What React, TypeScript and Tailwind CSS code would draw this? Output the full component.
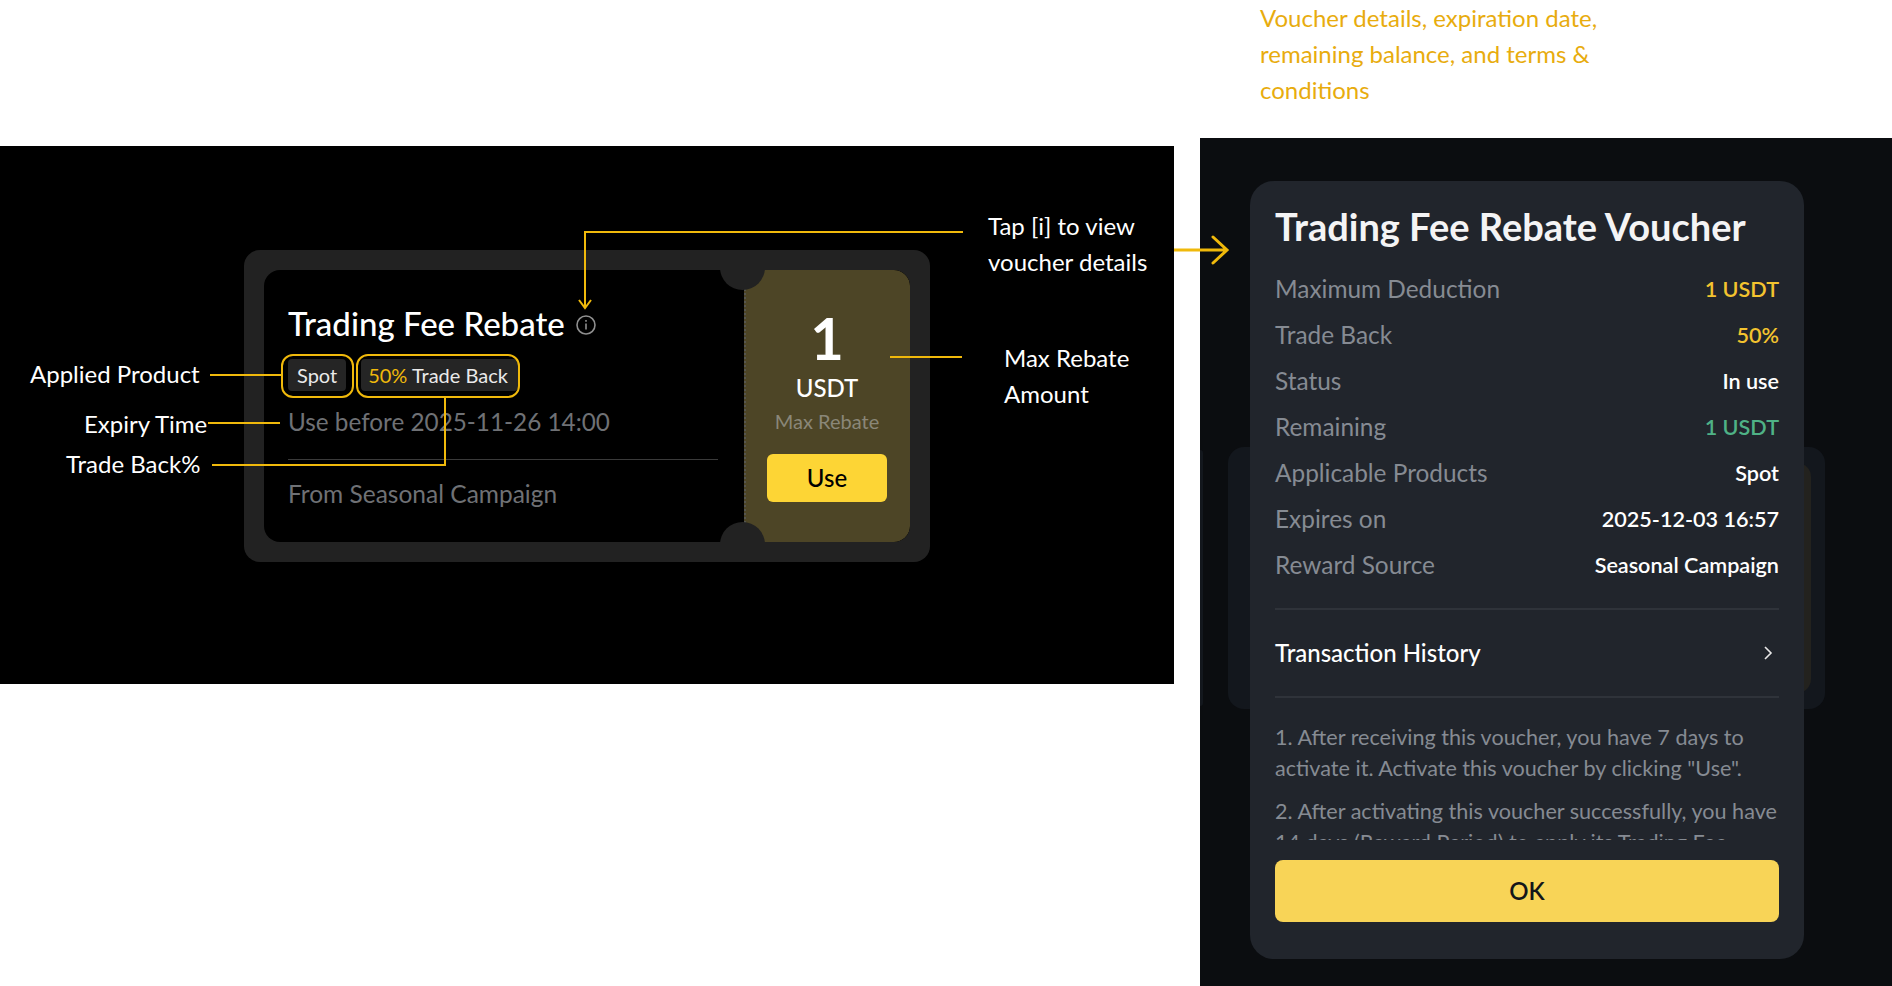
const font = { fontFamily: '"Lato", "Liberation Sans", sans-serif' };

const rows = [
  { label: "Maximum Deduction", value: "1 USDT", color: "text-[#f3c32f]" },
  { label: "Trade Back", value: "50%", color: "text-[#f3c32f]" },
  { label: "Status", value: "In use", color: "text-white" },
  { label: "Remaining", value: "1 USDT", color: "text-[#4fb286]" },
  { label: "Applicable Products", value: "Spot", color: "text-white" },
  { label: "Expires on", value: "2025-12-03 16:57", color: "text-white" },
  { label: "Reward Source", value: "Seasonal Campaign", color: "text-white" },
];

function Line({ className }: { className: string }) {
  return <div className={`absolute bg-[#f0b90b] ${className}`} />;
}

function Label({ className, children }: { className: string; children: React.ReactNode }) {
  return <div className={`absolute text-[24px] leading-[36px] text-white ${className}`}>{children}</div>;
}

function Ticket() {
  return (
    <div className="ml-[244px] mt-[104px] h-[312px] w-[686px] rounded-[16px] bg-[#222222] p-[20px]">
      <div className="relative flex h-[272px] w-[646px] overflow-hidden rounded-[16px] bg-black">
        <div className="w-[480px] pl-[24px] pt-[34px]">
          <div className="flex h-[40px] items-center text-[33px] font-medium text-white">
            Trading Fee Rebate
            <svg className="ml-[11px] mt-[2px]" width="20" height="20" viewBox="0 0 20 20" fill="none" stroke="#8f8f8f" strokeWidth="1.6">
              <circle cx="10" cy="10" r="9" />
              <path d="M10 8.5v6M10 5v1.8" />
            </svg>
          </div>
          <div className="mt-[15px] flex gap-[15px] text-[20px] leading-[32px] text-[#eaeaea]">
            <span className="rounded-[4px] bg-[#252525] px-[9px]">Spot</span>
            <span className="rounded-[4px] bg-[#252525] pl-[7px] pr-[10px]">
              <span className="text-[#f0b90b]">50%</span> Trade Back
            </span>
          </div>
          <div className="mt-[15px] text-[24.3px] leading-[32px] text-[#6f7175]">Use before 2025-11-26 14:00</div>
          <div className="mt-[21px] h-px w-[430px] bg-[#3a3a3a]" />
          <div className="mt-[18px] text-[24.5px] leading-[32px] text-[#6f7175]">From Seasonal Campaign</div>
        </div>
        <div className="flex w-[166px] flex-col items-center rounded-r-[16px] border-l-2 border-dotted border-[#55554f] bg-[#4d4526] pr-[2px] pt-[36px]">
          <div className="text-[58px] font-bold leading-[64px] text-white">1</div>
          <div className="mt-[2px] text-[24px] font-medium leading-[32px] text-white">USDT</div>
          <div className="mt-[3px] text-[20px] leading-[28px] text-[#8a8778]">Max Rebate</div>
          <button className="mt-[19px] h-[48px] w-[120px] rounded-[6px] bg-[#fdd535] text-[24px] font-medium text-black">Use</button>
        </div>
        {/* ticket notches */}
        <div className="absolute left-[456px] top-[-25px] h-[45px] w-[45px] rounded-full bg-[#222222]" />
        <div className="absolute bottom-[-25px] left-[456px] h-[45px] w-[45px] rounded-full bg-[#222222]" />
      </div>
    </div>
  );
}

function Details() {
  return (
    <div className="relative z-10 ml-[50px] mt-[43px] h-[778px] w-[554px] rounded-[24px] bg-[#21252c] px-[25px] pt-[21px]">
      <div className="text-[38px] font-bold leading-[48px] text-[#f4f4f5]">Trading Fee Rebate Voucher</div>
      <div className="mt-[16px]">
        {rows.map((r) => (
          <div key={r.label} className="flex h-[46px] items-center justify-between">
            <span className="text-[24.4px] text-[#868b93]">{r.label}</span>
            <span className={`text-[21.6px] font-semibold ${r.color}`}>{r.value}</span>
          </div>
        ))}
      </div>
      <div className="mt-[20px] h-[2px] bg-[#2f333a]" />
      <div className="flex h-[86px] items-center justify-between text-[24px] font-medium text-white">
        Transaction History
        <svg className="mr-[6px]" width="10" height="16" viewBox="0 0 10 16" fill="none" stroke="#e8e8e8" strokeWidth="1.6">
          <path d="M2 2l6 6-6 6" />
        </svg>
      </div>
      <div className="h-[2px] bg-[#2f333a]" />
      <div className="mt-[24px] h-[118px] overflow-hidden text-[21.6px] leading-[30.5px] text-[#868b93]">
        <p>1. After receiving this voucher, you have 7 days to activate it. Activate this voucher by clicking "Use".</p>
        <p className="mt-[13px]">2. After activating this voucher successfully, you have 14 days (Reward Period) to apply its Trading Fee</p>
      </div>
      <button className="mt-[20px] h-[62px] w-full rounded-[8px] bg-[#f8d457] text-[24px] font-semibold text-[#14161a]">OK</button>
    </div>
  );
}

export default function App() {
  return (
    <div className="relative h-[986px] w-[1892px] overflow-hidden bg-white" style={font}>
      <div className="flex">
        <div className="mt-[146px] h-[538px] w-[1174px] overflow-hidden bg-black">
          <Ticket />
        </div>
        <div className="ml-[26px] flex h-[986px] w-[692px] flex-col">
          <div className="h-[138px] pl-[60px] text-[24px] leading-[36px] text-[#e8ac0e]">
            Voucher details, expiration date,
            <br />
            remaining balance, and terms &amp;
            <br />
            conditions
          </div>
          <div className="relative flex-1 overflow-hidden bg-[#0b0d10]">
            {/* vouchers behind the dialog, dimmed */}
            <div className="absolute left-0 top-[312px] h-[256px] w-[3px] rounded-r-[4px] bg-[#13171d]" />
            <div className="absolute left-[28px] top-[309px] h-[262px] w-[597px] rounded-[16px] bg-[#13171d]" />
            <div className="absolute right-[81px] top-[325px] h-[230px] w-[30px] rounded-r-[14px] bg-[#23221e]" />
            <Details />
          </div>
        </div>
      </div>

      {/* annotations */}
      <Line className="left-[585px] top-[231px] h-[2px] w-[378px]" />
      <Line className="left-[584px] top-[231px] h-[76px] w-[2px]" />
      <svg className="absolute left-[578px] top-[299px]" width="14" height="11" viewBox="0 0 14 11" fill="none" stroke="#f0b90b" strokeWidth="2">
        <path d="M1 1l6 8 6-8" />
      </svg>
      <Line className="left-[210px] top-[374px] h-[2px] w-[71px]" />
      <Line className="left-[208px] top-[422px] h-[2px] w-[72px]" />
      <Line className="left-[212px] top-[464px] h-[2px] w-[234px]" />
      <Line className="left-[444px] top-[397px] h-[69px] w-[2px]" />
      <Line className="left-[890px] top-[356px] h-[2px] w-[72px]" />
      <div className="absolute left-[281px] top-[354px] h-[44px] w-[73px] rounded-[12px] border-2 border-[#f0b90b]" />
      <div className="absolute left-[356px] top-[354px] h-[44px] w-[164px] rounded-[12px] border-2 border-[#f0b90b]" />
      <svg className="absolute left-[1174px] top-[235px]" width="56" height="30" viewBox="0 0 56 30" fill="none" stroke="#f0b90b" strokeWidth="3" strokeLinecap="round">
        <path d="M0 15h52M39 2l14 13-14 13" />
      </svg>
      <Label className="left-[30px] top-[356px]">Applied Product</Label>
      <Label className="left-[84px] top-[406px]">Expiry Time</Label>
      <Label className="left-[66px] top-[446px]">Trade Back%</Label>
      <Label className="left-[988px] top-[208px]">Tap [i] to view</Label>
      <Label className="left-[988px] top-[244px]">voucher details</Label>
      <Label className="left-[1004px] top-[340px]">Max Rebate</Label>
      <Label className="left-[1004px] top-[376px]">Amount</Label>
    </div>
  );
}
